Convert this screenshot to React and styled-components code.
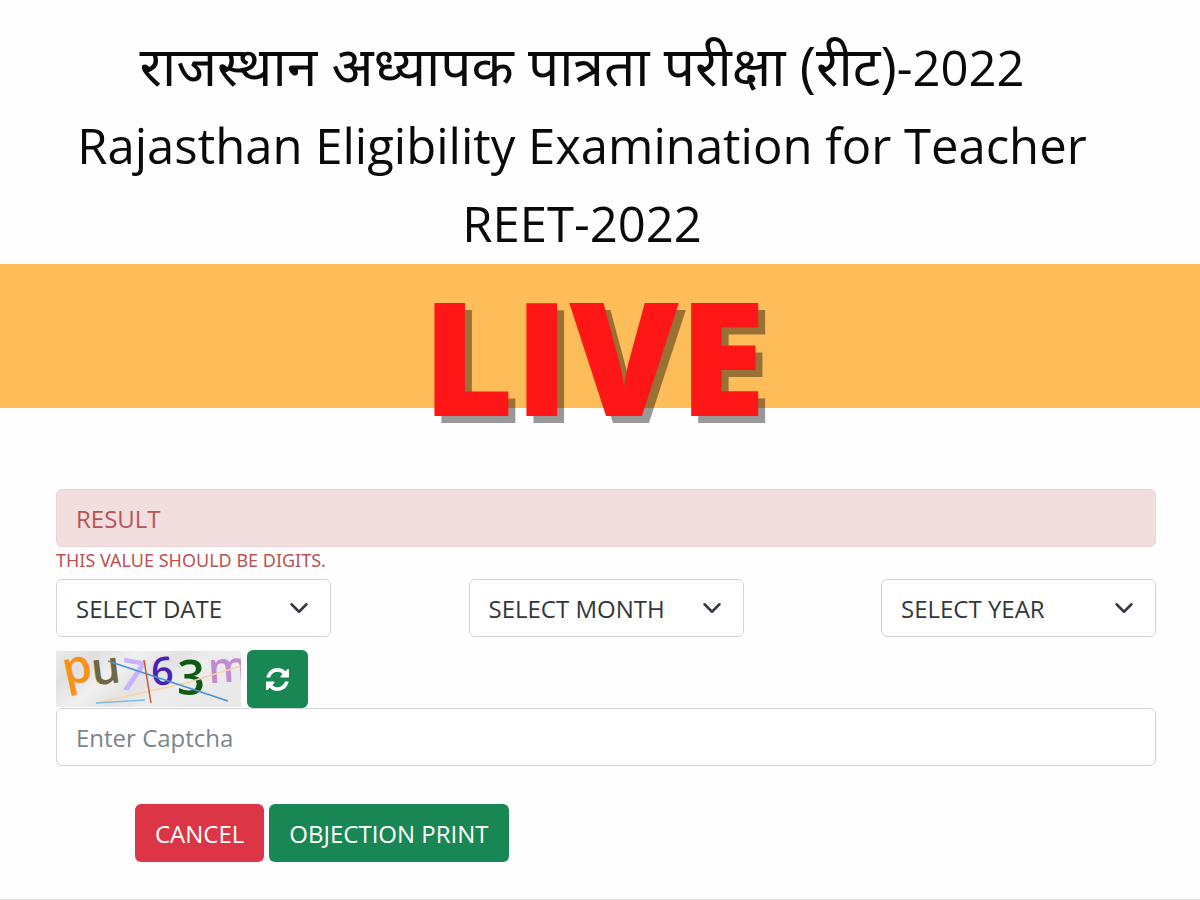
import { useState } from "react";
import styled, { createGlobalStyle } from "styled-components";

const months = ["January", "February", "March", "April", "May", "June", "July", "August", "September", "October", "November", "December"];
const dates = Array.from({ length: 31 }, (_, i) => i + 1);
const years = Array.from({ length: 50 }, (_, i) => 2004 - i);

const selects = [
  { id: "date", label: "SELECT DATE", options: dates },
  { id: "month", label: "SELECT MONTH", options: months },
  { id: "year", label: "SELECT YEAR", options: years },
];

const SelectField = ({ id, label, options }) => (
  <SelectWrap>
    <Select id={id} aria-label={label} defaultValue="">
      <option value="">{label}</option>
      {options.map((o) => (
        <option key={o} value={o}>
          {o}
        </option>
      ))}
    </Select>
    <Chevron viewBox="0 0 16 16" aria-hidden="true">
      <path d="m2 5 6 6 6-6" />
    </Chevron>
  </SelectWrap>
);

const Captcha = () => (
  <CaptchaImage viewBox="0 0 185 56" role="img" aria-label="Captcha">
    <defs>
      <linearGradient id="paper" x1="0" y1="0" x2="1" y2="0.4">
        <stop offset="0" stopColor="#ebebeb" />
        <stop offset="0.2" stopColor="#dfdfdf" />
        <stop offset="0.4" stopColor="#f0f0f0" />
        <stop offset="0.6" stopColor="#e2e2e2" />
        <stop offset="0.75" stopColor="#ededed" />
        <stop offset="1" stopColor="#e9e9e9" />
      </linearGradient>
    </defs>
    <rect width="185" height="56" fill="url(#paper)" />
    <text x="7" y="32" fontSize="47" fill="#f9901a" transform="rotate(-12 21 20)">p</text>
    <text x="35" y="33" fontSize="46" fill="#706744" transform="rotate(-7 48 18)">u</text>
    <text x="64" y="40" fontSize="44" fill="#c8b3ff" transform="rotate(10 77 24)">7</text>
    <text x="95" y="34" fontSize="39" fill="#4a22b4" transform="rotate(-4 107 20)">6</text>
    <text x="121" y="44" fontSize="49" fill="#0f5a12">3</text>
    <text x="152" y="31" fontSize="42" fill="#c08bd3" transform="rotate(-4 170 18)">m</text>
    <g fill="none" strokeWidth="1.5">
      <path d="M40 52 130 32 185 15" stroke="#fbd3a3" />
      <path d="M52 10 172 50" stroke="#4a90d9" />
      <path d="M40 52 89 49" stroke="#7fbcec" />
      <path d="M88 9 95 52" stroke="#c4593a" />
    </g>
  </CaptchaImage>
);

const RefreshIcon = () => (
  <svg viewBox="0 0 1536 1792" width="23" height="27" fill="currentColor" aria-hidden="true">
    <path d="M1511 1056q0 5-1 7-64 268-268 434.500t-478 166.500q-146 0-282.500-55t-243.500-157l-129 129q-19 19-45 19t-45-19-19-45v-448q0-26 19-45t45-19h448q26 0 45 19t19 45-19 45l-137 137q71 66 161 102t187 36q134 0 250-65t186-179q11-17 53-117 8-23 30-23h192q13 0 22.500 9.500t9.500 22.500zm25-800v448q0 26-19 45t-45 19h-448q-26 0-45-19t-19-45 19-45l138-138q-148-137-349-137-134 0-250 65t-186 179q-11 17-53 117-8 23-30 23h-199q-13 0-22.500-9.500t-9.500-22.500v-7q65-268 270-434.500t480-166.500q146 0 284 55.500t245 156.500l130-129q19-19 45-19t45 19 19 45z" />
  </svg>
);

export default function App() {
  const [captcha, setCaptcha] = useState("");

  return (
    <>
      <GlobalStyle />
      <Page>
        <Header>
          <Title>
            <Hindi lang="hi">राजस्थान अध्यापक पात्रता परीक्षा (रीट)</Hindi>-2022
          </Title>
          <Title>Rajasthan Eligibility Examination for Teacher</Title>
          <Title>REET-2022</Title>
        </Header>
        <Banner>
          <Live>LIVE</Live>
        </Banner>
        <Form onSubmit={(e) => e.preventDefault()}>
          <ResultInput type="text" aria-label="Result" aria-describedby="result-error" defaultValue="RESULT" />
          <ErrorText id="result-error">THIS VALUE SHOULD BE DIGITS.</ErrorText>
          <SelectRow>
            {selects.map((s) => (
              <SelectField key={s.id} {...s} />
            ))}
          </SelectRow>
          <CaptchaRow>
            <Captcha />
            <RefreshButton type="button" aria-label="Refresh captcha">
              <RefreshIcon />
            </RefreshButton>
          </CaptchaRow>
          <Input
            type="text"
            aria-label="Enter Captcha"
            placeholder="Enter Captcha"
            value={captcha}
            onChange={(e) => setCaptcha(e.target.value)}
          />
          <Actions>
            <Button type="reset" $color="#dc3545">
              CANCEL
            </Button>
            <Button type="submit" $color="#198754">
              OBJECTION PRINT
            </Button>
          </Actions>
        </Form>
      </Page>
    </>
  );
}

// Styled components
const GlobalStyle = createGlobalStyle`
  * {
    box-sizing: border-box;
  }
  body {
    margin: 0;
    background: #fefefe;
    color: #32373c;
    font-family: "Open Sans", "Noto Sans", sans-serif;
    font-size: 24px;
  }
  input, select, button {
    margin: 0;
    font: inherit;
  }
`;

const Page = styled.main`
  min-height: 100vh;
  border-bottom: 1px solid #e2dfc8;
`;

const Header = styled.header`
  display: flex;
  flex-direction: column;
  align-items: center;
  height: 264px;
  padding: 28px 36px 0 0;
`;

const Title = styled.h1`
  margin: 0;
  color: #0a0a0a;
  font-size: 49px;
  font-weight: 400;
  line-height: 78px;
  white-space: nowrap;
`;

const Hindi = styled.span`
  font-size: 55px;
  line-height: 1;
`;

const Banner = styled.div`
  display: flex;
  align-items: flex-start;
  justify-content: center;
  height: 144px;
  padding: 19px 12px 0 0;
  background: #ffbd59;
`;

const Live = styled.strong`
  color: #ff1616;
  font-family: "Open Sans", sans-serif;
  font-size: 158px;
  font-weight: 800;
  line-height: 144px;
  text-shadow: 7px 7px 0 rgba(0, 0, 0, 0.4);
`;

const Form = styled.form`
  display: flex;
  flex-direction: column;
  padding: 81px 44px 37px 56px;
`;

const Input = styled.input`
  width: 100%;
  height: 58px;
  padding: 0 19px;
  border: 1px solid #ced4da;
  border-radius: 6px;
  background: #fff;
  color: #32373c;

  &::placeholder {
    color: #7b848c;
    opacity: 1;
  }
`;

const ResultInput = styled(Input)`
  border-color: #eed3d7;
  background: #f2dede;
  color: #b95452;
`;

const ErrorText = styled.span`
  color: #b95452;
  font-family: "Noto Sans", sans-serif;
  font-size: 18px;
  line-height: 26px;
`;

const SelectRow = styled.div`
  display: flex;
  justify-content: space-between;
  margin-top: 6px;
`;

const SelectWrap = styled.div`
  position: relative;
  width: 25%;
`;

const Select = styled.select`
  width: 100%;
  height: 58px;
  padding: 0 60px 0 19px;
  border: 1px solid #ced4da;
  border-radius: 6px;
  background: #fff;
  color: #32373c;
  appearance: none;
`;

const Chevron = styled.svg`
  position: absolute;
  top: 19px;
  right: 22px;
  width: 20px;
  height: 20px;
  fill: none;
  stroke: #343a40;
  stroke-width: 2;
  stroke-linecap: round;
  stroke-linejoin: round;
  pointer-events: none;
`;

const CaptchaRow = styled.div`
  display: flex;
  align-items: center;
  gap: 6px;
  margin-top: 13px;
`;

const CaptchaImage = styled.svg`
  width: 185px;
  height: 56px;
  font-family: "Open Sans", sans-serif;
  font-weight: 600;
`;

const Button = styled.button`
  height: 58px;
  padding: 0 20px;
  border: 0;
  border-radius: 6px;
  background: ${(props) => props.$color};
  color: #fff;
  cursor: pointer;
`;

const RefreshButton = styled(Button).attrs({ $color: "#198754" })`
  display: flex;
  align-items: center;
  justify-content: center;
  width: 61px;
  padding: 0;
`;

const Actions = styled.div`
  display: flex;
  gap: 5px;
  margin-top: 38px;
  padding-left: 79px;
`;
